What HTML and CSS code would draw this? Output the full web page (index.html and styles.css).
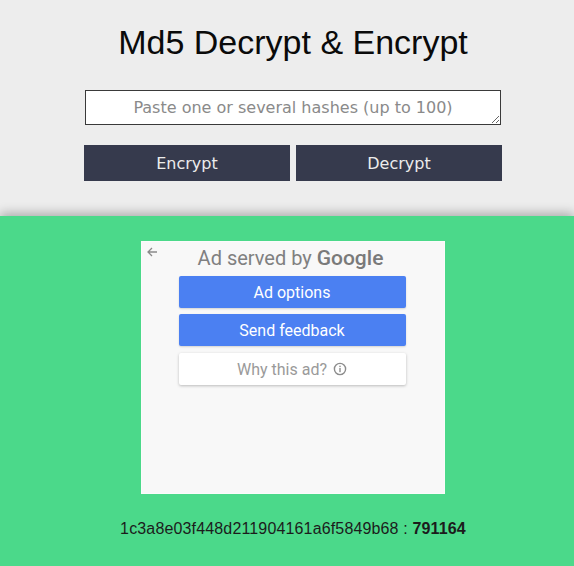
FILE: index.html
```html
<!DOCTYPE html>
<html lang="en">
<head>
<meta charset="utf-8">
<title>Md5 Decrypt &amp; Encrypt</title>
<link rel="stylesheet" href="styles.css">
</head>
<body>
<header class="top">
  <h1 class="title">Md5 Decrypt &amp; Encrypt</h1>
  <textarea class="hashes" placeholder="Paste one or several hashes (up to 100)"></textarea>
  <div class="actions">
    <button class="btn">Encrypt</button>
    <button class="btn">Decrypt</button>
  </div>
</header>
<main class="result">
  <div class="ad">
    <svg class="ad-back" width="11" height="10" viewBox="0 0 11 10"><path d="M10 5H1.5M5 1L1 5l4 4" fill="none" stroke="#8a8a8a" stroke-width="1.3"/></svg>
    <div class="ad-head">Ad served by <span class="ad-logo">Google</span></div>
    <div class="ad-buttons">
      <div class="ad-btn ad-blue">Ad options</div>
      <div class="ad-btn ad-blue">Send feedback</div>
      <div class="ad-btn ad-white">Why this ad?
        <svg class="ad-info" width="14" height="14" viewBox="0 0 14 14"><circle cx="7" cy="7" r="5.6" fill="none" stroke="#8c8c8c" stroke-width="1.4"/><rect x="6.3" y="6" width="1.4" height="4.2" fill="#8c8c8c"/><rect x="6.3" y="3.7" width="1.4" height="1.4" fill="#8c8c8c"/></svg>
      </div>
    </div>
  </div>
  <p class="hash">1c3a8e03f448d211904161a6f5849b68 : <b>791164</b></p>
</main>
</body>
</html>
```
FILE: styles.css
```css
html, body {
  margin: 0;
  padding: 0;
}
body {
  background: #4bd98a;
  font-family: "Liberation Sans", Arial, sans-serif;
}
.top {
  background: #ededed;
  height: 216px;
  box-sizing: border-box;
  padding: 24px 0 0 12px;
  display: flex;
  flex-direction: column;
  align-items: center;
}
.title {
  margin: 0;
  font-family: "Liberation Sans", Arial, sans-serif;
  font-weight: normal;
  font-size: 34px;
  line-height: 36px;
  color: #0a0a0a;
}
.hashes {
  display: block;
  margin-top: 30px;
  width: 416px;
  height: 35px;
  box-sizing: border-box;
  border: 1px solid #3a3a3a;
  padding: 7px 4px 0;
  font-family: "DejaVu Sans", sans-serif;
  font-size: 16px;
  text-align: center;
  background: #fff;
}
.hashes::placeholder {
  color: #8a8a8a;
}
.actions {
  margin-top: 20px;
  display: flex;
  gap: 6px;
  width: 418px;
}
.btn {
  flex: 1;
  height: 36px;
  border: none;
  background: #363a4d;
  color: #ececec;
  font-family: "DejaVu Sans", sans-serif;
  font-size: 16px;
  padding: 0;
}
.result {
  box-shadow: 0 -3px 10px rgba(0, 0, 0, 0.28);
  padding: 25px 0 40px 12px;
  display: flex;
  flex-direction: column;
  align-items: center;
}
.ad {
  position: relative;
  width: 304px;
  height: 253px;
  box-sizing: border-box;
  background: #f8f8f8;
  border: 1px solid #fbfbfb;
  padding-top: 4px;
  display: flex;
  flex-direction: column;
  align-items: center;
  font-family: Roboto, "Liberation Sans", sans-serif;
}
.ad-back {
  position: absolute;
  left: 5px;
  top: 5px;
}
.ad-head {
  font-size: 20px;
  line-height: 24px;
  color: #808080;
  margin-right: 5px;
}
.ad-logo {
  font-weight: 500;
  font-size: 21px;
  color: #7a7a7a;
}
.ad-buttons {
  margin: 6px 2px 0 0;
  display: flex;
  flex-direction: column;
  gap: 6px;
  width: 227px;
}
.ad-btn {
  height: 32px;
  border-radius: 2px;
  font-size: 16px;
  display: flex;
  align-items: center;
  justify-content: center;
  gap: 6px;
}
.ad-blue {
  background: #4b80f2;
  color: #fff;
  box-shadow: 0 1px 2px rgba(0, 0, 0, 0.15);
}
.ad-white {
  margin-top: 1px;
  background: #fff;
  color: #9a9a9a;
  box-shadow: 0 1px 3px rgba(0, 0, 0, 0.25);
}
.ad-info {
  display: block;
}
.hash {
  margin: 26px 0 0;
  font-size: 16px;
  line-height: 18px;
  letter-spacing: 0.15px;
  color: #1c1c1c;
}
.hash b {
  font-weight: bold;
}
```
